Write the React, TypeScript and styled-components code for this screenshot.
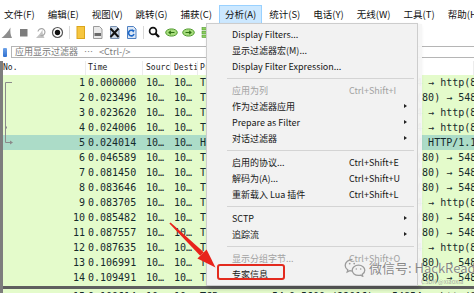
import React from "react";
import styled, { createGlobalStyle, css } from "styled-components";

const UI_FONT = `"Noto Sans CJK SC", "Noto Sans", sans-serif`;
const MONO = `"DejaVu Sans Mono", "Liberation Mono", monospace`;

const GlobalStyle = createGlobalStyle`
  html, body { margin: 0; padding: 0; background: #fff; overflow: hidden; }
  #root { width: 474px; height: 293px; }
`;

const Window = styled.div`
  position: relative;
  width: 474px;
  height: 293px;
  overflow: hidden;
  display: flex;
  flex-direction: column;
  background: #fff;
  font-family: ${UI_FONT};
`;

const MenuBar = styled.div`
  display: flex;
  align-items: flex-end;
  height: 24px;
  margin-left: -2px;
  flex-shrink: 0;
`;

const MenuTitle = styled.div<{ $active?: boolean }>`
  height: 17px;
  line-height: 17px;
  padding: 0 5px;
  margin-right: 1px;
  font-size: 9.5px;
  color: #111;
  white-space: nowrap;
  border: 1px solid transparent;
  ${(p) =>
    p.$active &&
    css`
      background: #cce8ff;
      border-color: #99d1ff;
    `}
`;

const ToolBar = styled.div`
  display: flex;
  align-items: center;
  height: 17px;
  margin-left: -2px;
  flex-shrink: 0;
`;

const ToolButton = styled.div`
  width: 17px;
  height: 17px;
  display: flex;
  align-items: center;
  justify-content: center;
`;

const ToolSep = styled.div`
  width: 6px;
  height: 13px;
  display: flex;
  justify-content: center;
  &::after {
    content: "";
    width: 1px;
    height: 100%;
    background: #d9d9d9;
  }
`;

const FilterRow = styled.div`
  display: flex;
  align-items: flex-start;
  gap: 4px;
  height: 17px;
  padding: 5px 0 0 3px;
  box-sizing: border-box;
  flex-shrink: 0;
`;

const Bookmark = styled.div`
  width: 4px;
  height: 9px;
  margin-top: 2px;
  background: linear-gradient(#6fa3e8, #2f6fd0);
  border-radius: 1px;
`;

const FilterInput = styled.div`
  flex: 1;
  height: 12px;
  box-sizing: border-box;
  border: 1px solid #b5b5b5;
  border-right: none;
  padding-left: 3px;
  font-size: 9px;
  line-height: 10px;
  word-spacing: 4px;
  color: #7a7a7a;
  white-space: nowrap;
`;

const PacketList = styled.div`
  flex: 1;
  margin-top: 3px;
  border-left: 3px solid #7d7d7d;
  background: #e4fbcb;
  overflow: hidden;
`;

const COLS = "83px 57px 28px 27px 48px 40px 102px 1fr";

const HeaderRow = styled.div`
  display: grid;
  grid-template-columns: ${COLS};
  height: 14px;
  line-height: 14px;
  background: #fff;
  font-family: ${MONO};
  font-size: 8px;
  color: #222;
`;

const HeadCell = styled.div<{ $pad?: number; $padRight?: number }>`
  padding: 0 ${(p) => p.$padRight ?? 3}px 0 ${(p) => p.$pad ?? 3}px;
  overflow: hidden;
  white-space: nowrap;
  border-right: 1px solid #ececec;
`;

const PacketRow = styled.div<{ $selected?: boolean }>`
  display: grid;
  grid-template-columns: ${COLS};
  height: 15px;
  line-height: 15px;
  font-family: ${MONO};
  font-size: 10px;
  color: #15292b;
  background: ${(p) => (p.$selected ? "#acdcc8" : "#e4fbcb")};
`;

const Cell = styled.div<{ $right?: boolean; $pad?: number }>`
  padding: 0 2px 0 ${(p) => p.$pad ?? 3}px;
  overflow: hidden;
  white-space: nowrap;
  text-align: ${(p) => (p.$right ? "right" : "left")};
`;

const NoCell = styled.div`
  display: flex;
  align-items: stretch;
  padding-right: 1px;
  & > span {
    margin-left: auto;
  }
`;

const Splitter = styled.div`
  height: 3px;
  margin-top: 1px;
  background: #5f5f5f;
`;

const DropMenu = styled.div`
  position: absolute;
  left: 206px;
  top: 23px;
  width: 212px;
  box-sizing: border-box;
  padding: 2px 0 3px;
  background: #f2f2f2;
  border: 1px solid #cdcdcd;
  box-shadow: 5px 0 0 -1px rgba(246, 246, 246, 0.96), 2px 3px 4px rgba(0, 0, 0, 0.2);
  font-size: 9px;
`;

const MenuEntry = styled.div<{ $disabled?: boolean }>`
  position: relative;
  display: grid;
  grid-template-columns: 117px 55px 1fr;
  align-items: center;
  height: 16px;
  padding-left: 25px;
  white-space: nowrap;
  color: ${(p) => (p.$disabled ? "#a2a2a2" : "#161616")};
`;

const MenuSep = styled.div`
  height: 8px;
  display: flex;
  align-items: center;
  padding: 0 3px 0 20px;
  &::after {
    content: "";
    flex: 1;
    height: 1px;
    background: #d4d4d4;
  }
`;

const SubArrow = styled.span`
  width: 0;
  height: 0;
  border-left: 3px solid #222;
  border-top: 2.5px solid transparent;
  border-bottom: 2.5px solid transparent;
`;

const Highlight = styled.div`
  position: absolute;
  left: 10px;
  top: -2px;
  width: 68px;
  height: 16px;
  box-sizing: border-box;
  border: 2px solid #e32a1e;
  border-radius: 3px;
`;

const Watermark = styled.div`
  position: absolute;
  left: 344px;
  top: 258px;
  display: flex;
  align-items: center;
  gap: 3px;
  font-size: 13px;
  color: rgba(115, 115, 115, 0.85);
  text-shadow: 0 0 1px rgba(255, 255, 255, 0.8);
  white-space: nowrap;
`;

const Credit = styled.div`
  position: absolute;
  left: 421px;
  top: 277px;
  font-size: 6px;
  color: rgba(150, 150, 150, 0.8);
  white-space: nowrap;
`;

const Overlay = styled.svg`
  position: absolute;
  left: 0;
  top: 0;
  pointer-events: none;
`;

type Ind = "start" | "line" | "dot" | "end" | undefined;

const Indicator = ({ kind }: { kind: Ind }) => (
  <svg width="12" height="15" viewBox="0 0 12 15">
    {kind === "start" && <path d="M2.5 15V7.5H9" fill="none" stroke="#8a8a8a" />}
    {(kind === "line" || kind === "dot") && <path d="M2.5 0V15" stroke="#8a8a8a" />}
    {kind === "dot" && <rect x="2" y="6.5" width="2" height="2" fill="#8a8a8a" />}
    {kind === "end" && (
      <>
        <path d="M2.5 0V7.5H9" fill="none" stroke="#8a8a8a" />
        <path d="M7 5.5L10 7.5L7 9.5Z" fill="#8a8a8a" />
      </>
    )}
  </svg>
);

const menus = ["文件(F)", "编辑(E)", "视图(V)", "跳转(G)", "捕获(C)", "分析(A)", "统计(S)", "电话(Y)", "无线(W)", "工具(T)", "帮助(H)"];

const rows: { no: number; time: string; proto: string; len: string; id: string; info: string; ind?: Ind; sel?: boolean }[] = [
  { no: 1, time: "0.000000", proto: "TCP", len: "66", id: "0x55fe (22014)", info: "54854 → http(80) [SYN] Seq=0 Win=8192", ind: "start" },
  { no: 2, time: "0.023496", proto: "TCP", len: "66", id: "0x0000 (0)", info: "http(80) → 54854 [SYN, ACK] Seq=0 Ack=1", ind: "line" },
  { no: 3, time: "0.023620", proto: "TCP", len: "54", id: "0x55ff (22015)", info: "54854 → http(80) [ACK] Seq=1 Ack=1", ind: "line" },
  { no: 4, time: "0.024006", proto: "TCP", len: "54", id: "0x5600 (22016)", info: "54854 → http(80) [PSH, ACK] Seq=1", ind: "dot" },
  { no: 5, time: "0.024014", proto: "HTTP", len: "425", id: "0x5601 (22017)", info: "GET / HTTP/1.1", ind: "end", sel: true },
  { no: 6, time: "0.046589", proto: "TCP", len: "60", id: "0x2a31 (10801)", info: "http(80) → 54854 [ACK] Seq=1 Ack=372" },
  { no: 7, time: "0.081450", proto: "TCP", len: "1506", id: "0x2a32 (10802)", info: "http(80) → 54854 [ACK] Seq=1" },
  { no: 8, time: "0.083646", proto: "TCP", len: "1506", id: "0x2a33 (10803)", info: "http(80) → 54854 [ACK] Seq=1453" },
  { no: 9, time: "0.083705", proto: "TCP", len: "54", id: "0x5602 (22018)", info: "54854 → http(80) [ACK] Seq=372" },
  { no: 10, time: "0.085482", proto: "TCP", len: "1506", id: "0x2a34 (10804)", info: "http(80) → 54854 [ACK] Seq=2905" },
  { no: 11, time: "0.087557", proto: "TCP", len: "1506", id: "0x2a35 (10805)", info: "http(80) → 54854 [ACK] Seq=4357" },
  { no: 12, time: "0.087635", proto: "TCP", len: "54", id: "0x5603 (22019)", info: "54854 → http(80) [ACK] Seq=372" },
  { no: 13, time: "0.106991", proto: "TCP", len: "1506", id: "0x2a36 (10806)", info: "http(80) → 54854 [ACK] Seq=5809" },
  { no: 14, time: "0.109491", proto: "TCP", len: "1506", id: "0x2a37 (10807)", info: "http(80) → 54854 [ACK] Seq=7261" },
];

type Entry = { label: string; shortcut?: string; sub?: boolean; disabled?: boolean; marked?: boolean } | "sep";

const entries: Entry[] = [
  { label: "Display Filters..." },
  { label: "显示过滤器宏(M)..." },
  { label: "Display Filter Expression..." },
  "sep",
  { label: "应用为列", shortcut: "Ctrl+Shift+I", disabled: true },
  { label: "作为过滤器应用", sub: true },
  { label: "Prepare as Filter", sub: true },
  { label: "对话过滤器", sub: true },
  "sep",
  { label: "启用的协议...", shortcut: "Ctrl+Shift+E" },
  { label: "解码为(A)...", shortcut: "Ctrl+Shift+U" },
  { label: "重新载入 Lua 插件", shortcut: "Ctrl+Shift+L" },
  "sep",
  { label: "SCTP", sub: true },
  { label: "追踪流", sub: true },
  "sep",
  { label: "显示分组字节...", shortcut: "Ctrl+Shift+O", disabled: true },
  { label: "专家信息", marked: true },
];

const Icon = ({ children }: { children: React.ReactNode }) => (
  <ToolButton>
    <svg width="13" height="13" viewBox="0 0 13 13">
      {children}
    </svg>
  </ToolButton>
);

const Toolbar = () => (
  <ToolBar>
    <Icon>
      <path d="M1.5 12C4 10 8 6 10.5 1.5C10 5.5 10.5 9 12 12Z" fill="#8d8d8d" />
    </Icon>
    <Icon>
      <rect x="3" y="3" width="7.5" height="7.5" fill="#7c7c7c" />
    </Icon>
    <Icon>
      <path d="M2 12C4 10 7 7 8.5 3.5C8.5 7 9 9.5 10.5 12Z" fill="#c3c3c3" />
      <path d="M4 5.5A3.5 3.5 0 1 1 6.5 9.5" fill="none" stroke="#a6a6a6" strokeWidth="1.2" />
    </Icon>
    <Icon>
      <circle cx="6.5" cy="6.5" r="5" fill="#fff" stroke="#555" strokeWidth="1.2" />
      <circle cx="6.5" cy="6.5" r="2.7" fill="#111" />
    </Icon>
    <ToolSep />
    <Icon>
      <rect x="3" y="0.5" width="7.5" height="12" fill="#f6c640" stroke="#dba51c" />
    </Icon>
    <Icon>
      <path d="M2.5 0.5H8.5L11 3V12.5H2.5Z" fill="#eaeaea" stroke="#9b9b9b" />
      <rect x="3.5" y="7" width="6.5" height="3" fill="#6a6a6a" />
    </Icon>
    <Icon>
      <path d="M2.5 0.5H8.5L11 3V12.5H2.5Z" fill="#cdd9e8" stroke="#7890b0" />
      <path d="M2.5 2.5L10.5 11M10.5 2.5L2.5 11" stroke="#111" strokeWidth="2" />
    </Icon>
    <Icon>
      <path d="M2.5 0.5H8.5L11 3V12.5H2.5Z" fill="#dce7f4" stroke="#4f80c2" />
      <path d="M9 8A2.8 2.8 0 1 1 8.2 5" fill="none" stroke="#1d68c9" strokeWidth="1.6" />
      <path d="M7 3.2L9.8 4.6L8 6.8Z" fill="#1d68c9" />
    </Icon>
    <ToolSep />
    <Icon>
      <circle cx="5" cy="5" r="3.4" fill="#fff" stroke="#111" strokeWidth="1.7" />
      <path d="M7.5 7.5L11 11" stroke="#111" strokeWidth="2.4" />
    </Icon>
    <Icon>
      <ellipse cx="6.5" cy="6.5" rx="5.8" ry="3.6" fill="#a6dc7c" stroke="#4f9a2d" />
      <path d="M9.5 6.5H4M5.8 4.8L4 6.5L5.8 8.2" fill="none" stroke="#2d6e12" strokeWidth="1.1" />
    </Icon>
    <Icon>
      <ellipse cx="6.5" cy="6.5" rx="5.8" ry="3.6" fill="#a6dc7c" stroke="#4f9a2d" />
      <path d="M3.5 6.5H9M7.2 4.8L9 6.5L7.2 8.2" fill="none" stroke="#2d6e12" strokeWidth="1.1" />
    </Icon>
    <Icon>
      <rect x="3" y="1.5" width="7" height="2.5" fill="#8fd060" stroke="#4f9a2d" strokeWidth="0.6" />
      <rect x="3" y="5.3" width="7" height="2.5" fill="#8fd060" stroke="#4f9a2d" strokeWidth="0.6" />
      <rect x="3" y="9" width="7" height="2.5" fill="#8fd060" stroke="#4f9a2d" strokeWidth="0.6" />
    </Icon>
  </ToolBar>
);

const WeChatLogo = () => (
  <svg width="22" height="19" viewBox="0 0 22 19">
    <path
      d="M8.5 1.5C4.4 1.5 1.2 4.2 1.2 7.4c0 1.8 1 3.4 2.6 4.5L3.2 14l2.6-1.3c0.9 0.3 1.8 0.4 2.7 0.4"
      fill="none"
      stroke="#9c9c9c"
      strokeWidth="1.3"
    />
    <circle cx="5.7" cy="5.6" r="0.9" fill="#9c9c9c" />
    <circle cx="10.2" cy="5.6" r="0.9" fill="#9c9c9c" />
    <path
      d="M14.5 7.2c-3.6 0-6.3 2.3-6.3 5.1s2.7 5.1 6.3 5.1c0.7 0 1.4-0.1 2-0.3l2.2 1.1-0.5-1.8c1.6-0.9 2.6-2.4 2.6-4.1 0-2.8-2.7-5.1-6.3-5.1z"
      fill="none"
      stroke="#9c9c9c"
      strokeWidth="1.3"
    />
    <circle cx="12.3" cy="11" r="0.8" fill="#9c9c9c" />
    <circle cx="16.7" cy="11" r="0.8" fill="#9c9c9c" />
  </svg>
);

export default function App() {
  return (
    <>
      <GlobalStyle />
      <Window>
        <MenuBar>
          {menus.map((m) => (
            <MenuTitle key={m} $active={m === "分析(A)"}>
              {m}
            </MenuTitle>
          ))}
        </MenuBar>
        <Toolbar />
        <FilterRow>
          <Bookmark />
          <FilterInput>应用显示过滤器 … &lt;Ctrl-/&gt;</FilterInput>
        </FilterRow>
        <PacketList>
          <HeaderRow>
            <HeadCell $pad={0}>No.</HeadCell>
            <HeadCell $pad={2}>Time</HeadCell>
            <HeadCell>Source</HeadCell>
            <HeadCell $padRight={6}>Destination</HeadCell>
            <HeadCell $pad={2}>Protocol</HeadCell>
            <HeadCell>Length</HeadCell>
            <HeadCell>Identification</HeadCell>
            <HeadCell>Info</HeadCell>
          </HeaderRow>
          {rows.map((r) => (
            <PacketRow key={r.no} $selected={r.sel}>
              <NoCell>
                <Indicator kind={r.ind} />
                <span>{r.no}</span>
              </NoCell>
              <Cell $pad={2}>{r.time}</Cell>
              <Cell>10…</Cell>
              <Cell>10…</Cell>
              <Cell $pad={2}>{r.proto}</Cell>
              <Cell $right>{r.len}</Cell>
              <Cell>{r.id}</Cell>
              <Cell $pad={4}>{r.info}</Cell>
            </PacketRow>
          ))}
          <Splitter />
          <PacketRow>
            <NoCell>
              <Indicator kind={undefined} />
              <span>15</span>
            </NoCell>
            <Cell $pad={2}>0.109614</Cell>
            <Cell>10…</Cell>
            <Cell>10…</Cell>
            <Cell $pad={2}>TCP</Cell>
            <Cell $right>54</Cell>
            <Cell>0x5600 (22016)</Cell>
            <Cell $pad={4}>54854 → http(80) [FIN, ACK]</Cell>
          </PacketRow>
        </PacketList>

        <DropMenu>
          {entries.map((e, i) =>
            e === "sep" ? (
              <MenuSep key={i} />
            ) : (
              <MenuEntry key={i} $disabled={e.disabled}>
                <span>{e.label}</span>
                <span>{e.shortcut ?? ""}</span>
                {e.sub ? <SubArrow /> : <span />}
                {e.marked && <Highlight />}
              </MenuEntry>
            )
          )}
        </DropMenu>

        <Watermark>
          <WeChatLogo />
          <span>微信号: HackRead</span>
        </Watermark>
        <Credit>CSDN @xiaoxia</Credit>

        <Overlay width="474" height="293" viewBox="0 0 474 293">
          <path d="M169.4 223.6L170.6 222.4L203.8 252.2L200.2 255.8Z" fill="#e8231b" />
          <path d="M197.4 258.6L206.6 249.4L215.5 267.5Z" fill="#e8231b" />
        </Overlay>
      </Window>
    </>
  );
}
